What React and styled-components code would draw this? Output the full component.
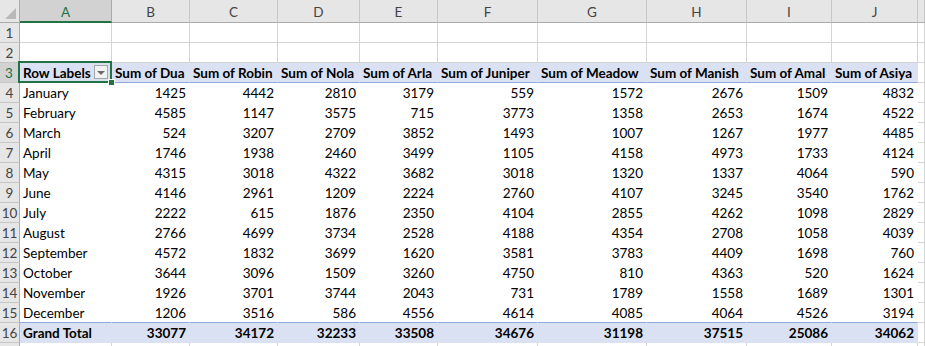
import React from 'react';
import styled, {createGlobalStyle, css} from 'styled-components';

const GlobalStyle = createGlobalStyle`
  html, body {
    margin: 0;
    padding: 0;
    background: #ffffff;
    overflow: hidden;
  }
  body {
    font-family: Lato, "Open Sans", sans-serif;
  }
`;

const GRID = '20px 92px 78px 88px 82px 78px 100px 109px 100px 85px 86px 1fr';
const LETTERS = ['A', 'B', 'C', 'D', 'E', 'F', 'G', 'H', 'I', 'J', ''];
const NAMES = ['Dua', 'Robin', 'Nola', 'Arla', 'Juniper', 'Meadow', 'Manish', 'Amal', 'Asiya'];

const months = [
  ['January', 1425, 4442, 2810, 3179, 559, 1572, 2676, 1509, 4832],
  ['February', 4585, 1147, 3575, 715, 3773, 1358, 2653, 1674, 4522],
  ['March', 524, 3207, 2709, 3852, 1493, 1007, 1267, 1977, 4485],
  ['April', 1746, 1938, 2460, 3499, 1105, 4158, 4973, 1733, 4124],
  ['May', 4315, 3018, 4322, 3682, 3018, 1320, 1337, 4064, 590],
  ['June', 4146, 2961, 1209, 2224, 2760, 4107, 3245, 3540, 1762],
  ['July', 2222, 615, 1876, 2350, 4104, 2855, 4262, 1098, 2829],
  ['August', 2766, 4699, 3734, 2528, 4188, 4354, 2708, 1058, 4039],
  ['September', 4572, 1832, 3699, 1620, 3581, 3783, 4409, 1698, 760],
  ['October', 3644, 3096, 1509, 3260, 4750, 810, 4363, 520, 1624],
  ['November', 1926, 3701, 3744, 2043, 731, 1789, 1558, 1689, 1301],
  ['December', 1206, 3516, 586, 4556, 4614, 4085, 4064, 4526, 3194],
];

const totals = NAMES.map((_, i) => months.reduce((sum, row) => sum + row[i + 1], 0));

const Sheet = styled.div`
  width: 925px;
  height: 346px;
  overflow: hidden;
  font-size: 13.5px;
  color: #000;
`;

const GridRow = styled.div`
  display: grid;
  grid-template-columns: ${GRID};
  height: ${p => p.$height}px;
`;

const Corner = styled.div`
  position: relative;
  box-sizing: border-box;
  background: #e6e6e6;
  border-right: 1px solid #ababab;
  border-bottom: 1px solid #ababab;

  &::after {
    content: '';
    position: absolute;
    right: 3px;
    bottom: 3px;
    width: 0;
    height: 0;
    border-left: 11px solid transparent;
    border-bottom: 11px solid #b9b9b9;
  }
`;

const ColHead = styled.div`
  box-sizing: border-box;
  display: flex;
  align-items: center;
  justify-content: center;
  padding-top: 2px;
  font-size: 13.5px;
  color: #444;
  background: #e6e6e6;
  border-right: 1px solid #c6c6c6;
  border-bottom: 1px solid #ababab;

  ${p => p.$selected && css`
    background: #d2d2d2;
    color: #217346;
    border-bottom: 2px solid #217346;
    border-right-color: #ababab;
  `}
`;

const RowHead = styled.div`
  box-sizing: border-box;
  display: flex;
  align-items: center;
  justify-content: center;
  padding-top: 1px;
  font-size: 13.5px;
  color: #444;
  background: #e6e6e6;
  border-right: 1px solid #ababab;
  border-bottom: 1px solid #c6c6c6;

  ${p => p.$selected && css`
    background: #d2d2d2;
    color: #217346;
    border-right: 2px solid #217346;
  `}
`;

const variants = {
  plain: css`
    background: #fff;
    border-right: 1px solid #d4d4d4;
    border-bottom: 1px solid #d4d4d4;
  `,
  head: css`
    background: #d9e1f2;
    font-weight: 700;
    border-right: 1px solid transparent;
    border-bottom: 1px solid #8ea9db;
  `,
  body: css`
    background: #fff;
    border-right: 1px solid transparent;
    border-bottom: 1px solid transparent;
  `,
  lastBody: css`
    background: #fff;
    border-right: 1px solid transparent;
    border-bottom: 1px solid #8ea9db;
  `,
  total: css`
    background: #d9e1f2;
    font-weight: 700;
    border-right: 1px solid transparent;
    border-bottom: 1px solid transparent;
  `,
};

const Cell = styled.div`
  position: relative;
  box-sizing: border-box;
  display: flex;
  align-items: center;
  justify-content: ${p => (p.$num ? 'flex-end' : 'flex-start')};
  padding: 1px 3px 0 3px;
  white-space: nowrap;
  overflow: visible;
  ${p => variants[p.$variant || 'plain']}
`;

const FilterButton = styled.span`
  position: absolute;
  right: 3px;
  top: 2px;
  width: 14px;
  height: 14px;
  box-sizing: border-box;
  background: #f2f2f2;
  border: 1px solid #a6a6a6;
  display: flex;
  align-items: center;
  justify-content: center;

  &::after {
    content: '';
    width: 0;
    height: 0;
    border-left: 4px solid transparent;
    border-right: 4px solid transparent;
    border-top: 4px solid #6b6b6b;
    margin-top: 1px;
  }
`;

const SelectionBox = styled.span`
  position: absolute;
  left: -2px;
  top: -2px;
  right: -1px;
  bottom: -1px;
  border: 2px solid #217346;
  z-index: 2;
  pointer-events: none;
`;

const FillHandle = styled.span`
  position: absolute;
  right: -5px;
  bottom: -5px;
  width: 5px;
  height: 5px;
  background: #217346;
  border: 1px solid #fff;
`;

const App = () => {
  // row 17 only peeks in at the bottom edge, so its number is left off
  const blankRow = (n, label = n) => (
    <GridRow $height={20} key={n}>
      <RowHead>{label}</RowHead>
      {LETTERS.map((l, i) => <Cell key={i}/>)}
    </GridRow>
  );

  return (
    <Sheet>
      <GlobalStyle/>

      <GridRow $height={23}>
        <Corner/>
        {LETTERS.map((l, i) => (
          <ColHead key={i} $selected={l === 'A'}>{l}</ColHead>
        ))}
      </GridRow>

      {blankRow(1)}
      {blankRow(2)}

      <GridRow $height={20}>
        <RowHead $selected>3</RowHead>
        <Cell $variant="head">
          Row Labels
          <FilterButton/>
          <SelectionBox>
            <FillHandle/>
          </SelectionBox>
        </Cell>
        {NAMES.map(name => (
          <Cell key={name} $variant="head">Sum of {name}</Cell>
        ))}
        <Cell/>
      </GridRow>

      {months.map((row, r) => (
        <GridRow $height={20} key={row[0]}>
          <RowHead>{r + 4}</RowHead>
          <Cell $variant={r === months.length - 1 ? 'lastBody' : 'body'}>{row[0]}</Cell>
          {row.slice(1).map((v, i) => (
            <Cell key={i} $num $variant={r === months.length - 1 ? 'lastBody' : 'body'}>{v}</Cell>
          ))}
          <Cell/>
        </GridRow>
      ))}

      <GridRow $height={20}>
        <RowHead>16</RowHead>
        <Cell $variant="total">Grand Total</Cell>
        {totals.map((v, i) => (
          <Cell key={i} $num $variant="total">{v}</Cell>
        ))}
        <Cell/>
      </GridRow>

      {blankRow(17, '')}
    </Sheet>
  );
};

export default App;
